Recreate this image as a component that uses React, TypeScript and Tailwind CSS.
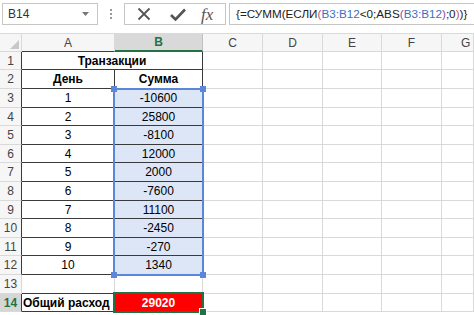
import React from "react";

const rowH = [
  "h-[18px]", "h-[19px]", "h-[19px]", "h-[18px]", "h-[19px]", "h-[18px]", "h-[19px]",
  "h-[19px]", "h-[18px]", "h-[19px]", "h-[18px]", "h-[19px]", "h-[19px]", "h-[18px]",
];

const data = [-10600, 25800, -8100, 12000, 2000, -7600, 11100, -2450, -270, 1340];

const grid = "border-r border-b border-[#d9d9d9]";
const dark = "border-r border-b border-[#3a3a3a]";

function EmptyCols() {
  return (
    <>
      <div className={`w-[60px] ${grid}`} />
      <div className={`w-[60px] ${grid}`} />
      <div className={`w-[59px] ${grid}`} />
      <div className={`w-[60px] ${grid}`} />
      <div className={`flex-1 ${grid}`} />
    </>
  );
}

function RowHead({ n, active }: { n: number; active?: boolean }) {
  const edge = n === 13 ? "border-r-[#d9d9d9]" : "border-r-[#3a3a3a]";
  return (
    <div
      className={`w-[22px] flex items-center justify-center border-r border-b border-b-[#d9d9d9] ${edge} ${
        active ? "bg-[#d6d6d6] text-[#217346] font-bold" : "bg-[#f6f6f6] text-[#444]"
      }`}
    >
      {n}
    </div>
  );
}

function Toolbar() {
  return (
    <div className="h-[33px] flex items-start pt-[3px] pl-[2px] bg-white">
      <div className="w-[96px] h-[22px] border border-[#c6c6c6] flex items-center justify-between pl-[5px] pr-[8px] text-[#333]">
        <span>B14</span>
        <svg width="7" height="4" viewBox="0 0 7 4">
          <path d="M0 0h7L3.5 4z" fill="#777" />
        </svg>
      </div>
      <div className="w-[26px] h-[22px] flex flex-col items-center justify-center gap-[2px]">
        <div className="w-[2px] h-[2px] bg-[#999]" />
        <div className="w-[2px] h-[2px] bg-[#999]" />
        <div className="w-[2px] h-[2px] bg-[#999]" />
      </div>
      <div className="w-[102px] h-[22px] border border-[#c6c6c6] flex items-center">
        <svg className="ml-[12px]" width="14" height="14" viewBox="0 0 14 14">
          <path d="M1.5 1.5l11 11M12.5 1.5l-11 11" stroke="#555" strokeWidth="1.8" />
        </svg>
        <svg className="ml-[19px]" width="16" height="13" viewBox="0 0 16 13">
          <path d="M1 7l4.5 4.5L15 1.5" stroke="#555" strokeWidth="2.6" fill="none" />
        </svg>
        <span className="ml-[15px] font-['Liberation_Serif',serif] italic text-[17px] text-[#555] leading-none">fx</span>
      </div>
      <div className="ml-[3px] flex-1 h-[22px] border-l border-t border-b border-[#c6c6c6] flex items-center pl-[6px] text-[11.7px] text-[#222] whitespace-nowrap overflow-hidden">
        <span>{"{=СУММ(ЕСЛИ"}</span>
        <span className="text-[#c8526a]">(</span>
        <span className="text-[#3c6fc4]">B3:B12</span>
        <span>{"<0;ABS"}</span>
        <span className="text-[#8a4fb0]">(</span>
        <span className="text-[#3c6fc4]">B3:B12</span>
        <span className="text-[#8a4fb0]">)</span>
        <span>;0</span>
        <span className="text-[#c8526a]">)</span>
        <span>{")}"}</span>
      </div>
    </div>
  );
}

export default function App() {
  return (
    <div className="w-[474px] h-[315px] overflow-hidden bg-white font-['Liberation_Sans',Arial,sans-serif] text-[12px] text-black">
      <Toolbar />
      <div className="relative">
        {/* column headers */}
        <div className="flex h-[19px] bg-[#f6f6f6] text-[#444] border-t border-[#d9d9d9]">
          <div className="w-[22px] border-r border-b border-[#d9d9d9] relative">
            <svg className="absolute right-[2px] bottom-[2px]" width="9" height="9" viewBox="0 0 9 9">
              <path d="M9 0v9H0z" fill="#c8c8c8" />
            </svg>
          </div>
          <div className="w-[93px] flex items-center justify-center border-r border-r-[#d9d9d9] border-b border-b-[#3a3a3a]">A</div>
          <div className="w-[88px] flex items-center justify-center bg-[#d9d9d9] text-[#217346] font-bold border-r border-r-[#c0c0c0] border-b-2 border-b-[#217346]">
            B
          </div>
          <div className={`w-[60px] flex items-center justify-center ${grid}`}>C</div>
          <div className={`w-[60px] flex items-center justify-center ${grid}`}>D</div>
          <div className={`w-[59px] flex items-center justify-center ${grid}`}>E</div>
          <div className={`w-[60px] flex items-center justify-center ${grid}`}>F</div>
          <div className={`flex-1 flex items-center pl-[19px] ${grid}`}>G</div>
        </div>

        {/* row 1 */}
        <div className={`flex ${rowH[0]}`}>
          <RowHead n={1} />
          <div className={`w-[181px] flex items-center justify-center font-bold ${dark}`}>Транзакции</div>
          <EmptyCols />
        </div>

        {/* row 2 */}
        <div className={`flex ${rowH[1]}`}>
          <RowHead n={2} />
          <div className={`w-[93px] flex items-center justify-center font-bold ${dark}`}>День</div>
          <div className={`w-[88px] flex items-center justify-center font-bold ${dark}`}>Сумма</div>
          <EmptyCols />
        </div>

        {/* data rows 3-12 */}
        {data.map((v, i) => (
          <div key={i} className={`flex ${rowH[i + 2]}`}>
            <RowHead n={i + 3} />
            <div className={`w-[93px] flex items-center justify-center ${dark}`}>{i + 1}</div>
            <div className={`w-[88px] flex items-center justify-center bg-[#dde6f6] ${dark}`}>{v}</div>
            <EmptyCols />
          </div>
        ))}

        {/* row 13 */}
        <div className={`flex ${rowH[12]}`}>
          <RowHead n={13} />
          <div className="w-[93px] border-r border-r-[#d9d9d9] border-b border-b-[#3a3a3a]" />
          <div className={`w-[88px] ${grid}`} />
          <EmptyCols />
        </div>

        {/* row 14 */}
        <div className={`flex ${rowH[13]}`}>
          <RowHead n={14} active />
          <div className={`w-[93px] flex items-center pl-[1px] font-bold whitespace-nowrap ${dark}`}>Общий расход</div>
          <div className={`w-[88px] flex items-center justify-center bg-[#ff0000] text-white font-bold ${dark}`}>29020</div>
          <EmptyCols />
        </div>

        {/* formula reference range B3:B12 */}
        <div className="absolute left-[113px] top-[55px] w-[91px] h-[188px] border-2 border-[#5b87d6] pointer-events-none">
          <div className="absolute -left-[4px] -top-[4px] w-[6px] h-[6px] bg-[#5b87d6]" />
          <div className="absolute -right-[4px] -top-[4px] w-[6px] h-[6px] bg-[#5b87d6]" />
          <div className="absolute -left-[4px] -bottom-[4px] w-[6px] h-[6px] bg-[#5b87d6]" />
          <div className="absolute -right-[4px] -bottom-[4px] w-[6px] h-[6px] bg-[#5b87d6]" />
        </div>

        {/* active cell B14 */}
        <div className="absolute left-[113px] top-[259px] w-[91px] h-[21px] border-2 border-[#217346] pointer-events-none">
          <div className="absolute -right-[4px] -bottom-[4px] w-[6px] h-[6px] bg-[#217346] outline outline-1 outline-white" />
        </div>
      </div>
    </div>
  );
}
